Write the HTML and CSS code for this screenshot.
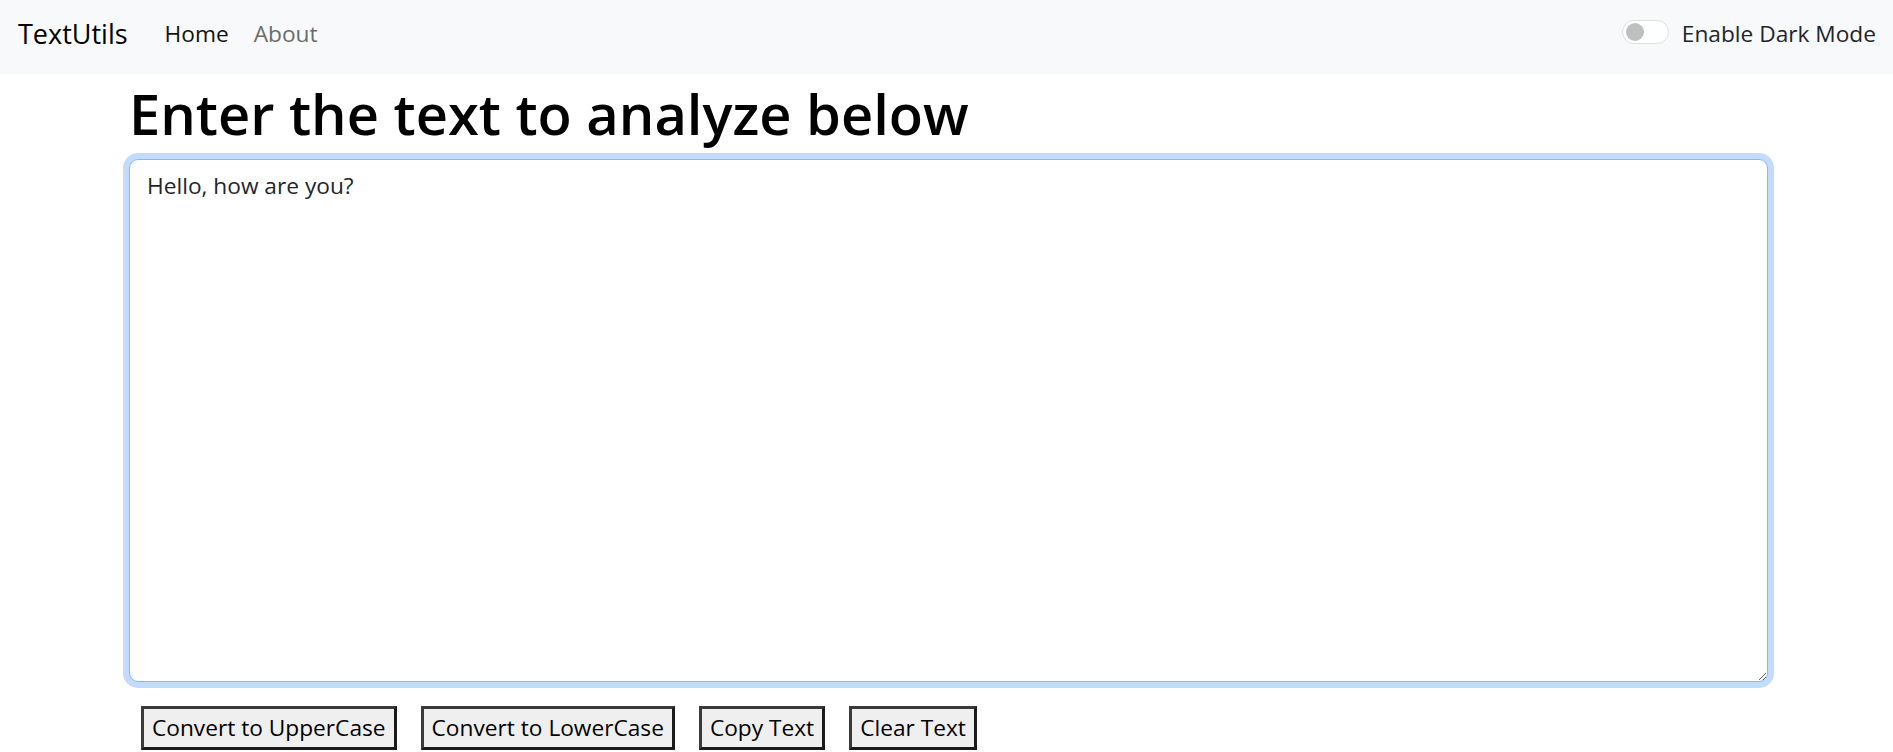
FILE: index.html
```html
<!DOCTYPE html>
<html lang="en">
<head>
<meta charset="utf-8">
<title>TextUtils</title>
<link rel="stylesheet" href="styles.css">
</head>
<body>
<nav class="navbar">
  <a class="brand" href="#">TextUtils</a>
  <ul class="nav-links">
    <li><a class="nav-link active" href="#">Home</a></li>
    <li><a class="nav-link" href="#">About</a></li>
  </ul>
  <label class="switch-wrap">
    <span class="switch"><span class="knob"></span></span>
    <span class="switch-label">Enable Dark Mode</span>
  </label>
</nav>
<main class="container">
  <h1 class="title">Enter the text to analyze below</h1>
  <textarea class="text-box" rows="8">Hello, how are you?</textarea>
  <div class="actions">
    <button class="btn">Convert to UpperCase</button>
    <button class="btn">Convert to LowerCase</button>
    <button class="btn">Copy Text</button>
    <button class="btn">Clear Text</button>
  </div>
</main>
</body>
</html>
```
FILE: styles.css
```css
* { box-sizing: border-box; }
html, body { margin: 0; padding: 0; }
body {
  font-family: "Segoe UI", "Open Sans", "Noto Sans", sans-serif;
  font-size: 22.7px;
  color: #212529;
  background: #fff;
  overflow: hidden;
}
.navbar {
  height: 74px;
  background: #f8f9fa;
  display: flex;
  align-items: center;
  padding: 0 17px 8px 18px;
}
.brand {
  font-size: 27px;
  color: #000;
  text-decoration: none;
  margin-right: 37px;
}
.nav-links {
  list-style: none;
  display: flex;
  gap: 25px;
  margin: 0;
  padding: 0;
  flex: 1;
}
.nav-link {
  font-size: 22.7px;
  color: #6c6c6c;
  text-decoration: none;
}
.nav-link.active { color: #111; }
.switch-wrap {
  display: flex;
  align-items: center;
  gap: 13px;
}
.switch {
  width: 47px;
  height: 24px;
  border: 1px solid #dcdfe3;
  border-radius: 12px;
  background: #fff;
  display: flex;
  align-items: center;
  padding-left: 3px;
  margin-top: -2px;
}
.knob {
  width: 18px;
  height: 18px;
  border-radius: 50%;
  background: #bfbfbf;
}
.switch-label {
  font-size: 22.7px;
  color: #212529;
}
.container {
  width: 1639px;
  margin: 0 auto;
  padding-left: 0;
  position: relative;
  left: 2px;
}
.title {
  font-size: 56px;
  font-weight: 600;
  color: #000;
  margin: 5.5px 0 12px;
  line-height: 1.2;
}
.text-box {
  display: block;
  width: 100%;
  height: 523px;
  font-family: inherit;
  font-size: 22.7px;
  color: #212529;
  border: 1px solid #86b7fe;
  border-radius: 9px;
  box-shadow: 0 0 0 6px #c2dbfe;
  padding: 10px 17px;
  outline: none;
  resize: vertical;
}
.actions {
  display: flex;
  gap: 24px;
  padding-left: 12px;
  margin-top: 24px;
}
.btn {
  height: 44px;
  font-family: inherit;
  font-size: 22.7px;
  color: #000;
  background: #efefef;
  border: 3px solid #3a3a3a;
  border-right-color: #1a1a1a;
  border-bottom-color: #1a1a1a;
  padding: 0 8px;
}
```
